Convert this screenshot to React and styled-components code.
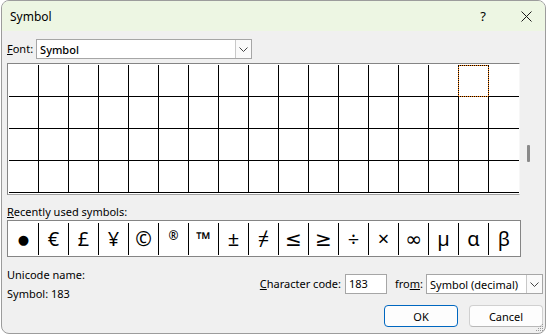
import React from 'react';
import styled, { createGlobalStyle } from 'styled-components';

const GlobalStyle = createGlobalStyle`
  html, body {
    margin: 0;
    padding: 0;
    background: #ffffff;
  }
  body {
    font-family: "Noto Sans", "DejaVu Sans", sans-serif;
    font-size: 11px;
    color: #000;
  }
`;

const COLS = 17;
const ROWS = 4;
const SELECTED = 15;

const recent = [
  { c: '●', size: 13 },
  { c: '€' },
  { c: '£' },
  { c: '¥' },
  { c: '©' },
  { c: '®', small: true },
  { c: '™', size: 19, bold: true },
  { c: '±' },
  { c: '≠' },
  { c: '≤' },
  { c: '≥' },
  { c: '÷' },
  { c: '×' },
  { c: '∞' },
  { c: 'µ' },
  { c: 'α' },
  { c: 'β' },
];

function Chevron() {
  return (
    <svg width="9" height="5" viewBox="0 0 9 5">
      <path d="M0.5 0.5 L4.5 4.5 L8.5 0.5" fill="none" stroke="#444" strokeWidth="1" />
    </svg>
  );
}

//Component
function App() {
  const cells = [];
  for (let i = 0; i < COLS * ROWS; i++) {
    const col = i % COLS;
    cells.push(
      <Cell key={i} last={col === COLS - 1}>
        {i === SELECTED && <Focus />}
      </Cell>
    );
  }

  return (
    <>
      <GlobalStyle />
      <SDWindow>
        <SDTitleBar>
          <SDTitle>Symbol</SDTitle>
          <SDHelp>?</SDHelp>
          <SDClose>
            <svg width="11" height="11" viewBox="0 0 11 11">
              <path d="M0.5 0.5 L10.5 10.5 M10.5 0.5 L0.5 10.5" stroke="#1a1a1a" strokeWidth="1" />
            </svg>
          </SDClose>
        </SDTitleBar>

        <SDBody>
          <SDFontRow>
            <SDLabel>
              <u>F</u>ont:
            </SDLabel>
            <SDCombo width="216px">
              <SDComboText bold>Symbol</SDComboText>
              <SDDrop>
                <Chevron />
              </SDDrop>
            </SDCombo>
          </SDFontRow>

          <SDGridArea>
            <SDGrid>{cells}</SDGrid>
            <SDScroll>
              <SDThumb />
            </SDScroll>
          </SDGridArea>

          <SDRecentLabel>
            <u>R</u>ecently used symbols:
          </SDRecentLabel>
          <SDRecentRow>
            {recent.map((s, i) => (
              <SDRecentCell key={i} last={i === recent.length - 1}>
                <SDGlyph small={s.small} size={s.size} bold={s.bold}>
                  {s.c}
                </SDGlyph>
              </SDRecentCell>
            ))}
          </SDRecentRow>

          <SDBottom>
            <SDInfo>
              <div>Unicode name:</div>
              <div>Symbol: 183</div>
            </SDInfo>
            <SDControls>
              <SDCodeRow>
                <SDLabel>
                  <u>C</u>haracter code:
                </SDLabel>
                <SDInput>183</SDInput>
                <SDFromLabel>
                  fro<u>m</u>:
                </SDFromLabel>
                <SDCombo width="117px">
                  <SDComboText>Symbol (decimal)</SDComboText>
                  <SDDrop>
                    <Chevron />
                  </SDDrop>
                </SDCombo>
              </SDCodeRow>
              <SDButtons>
                <SDButton primary>OK</SDButton>
                <SDButton>Cancel</SDButton>
              </SDButtons>
            </SDControls>
          </SDBottom>
        </SDBody>

        <SDGrip width="8" height="8" viewBox="0 0 8 8">
          <rect x="6" y="0" width="1" height="1" fill="#9a9a9a" />
          <rect x="4" y="2" width="1" height="1" fill="#9a9a9a" />
          <rect x="6" y="2" width="1" height="1" fill="#9a9a9a" />
          <rect x="2" y="4" width="1" height="1" fill="#9a9a9a" />
          <rect x="4" y="4" width="1" height="1" fill="#9a9a9a" />
          <rect x="6" y="4" width="1" height="1" fill="#9a9a9a" />
          <rect x="0" y="6" width="1" height="1" fill="#9a9a9a" />
          <rect x="2" y="6" width="1" height="1" fill="#9a9a9a" />
          <rect x="4" y="6" width="1" height="1" fill="#9a9a9a" />
          <rect x="6" y="6" width="1" height="1" fill="#9a9a9a" />
        </SDGrip>
      </SDWindow>
    </>
  );
}

//Styling Of Component

const SDWindow = styled.div`
  position: relative;
  box-sizing: border-box;
  margin-left: 1px;
  width: 545px;
  height: 334px;
  border: 1px solid #9c9c9c;
  border-radius: 8px;
  background: #f0f0f0;
  overflow: hidden;
  display: flex;
  flex-direction: column;
`;

const SDTitleBar = styled.div`
  display: flex;
  align-items: center;
  height: 30px;
  background: #edf6e3;
`;

const SDTitle = styled.div`
  flex: 1;
  padding-left: 8px;
  font-size: 12px;
`;

const SDHelp = styled.div`
  width: 48px;
  text-align: center;
  font-size: 13px;
`;

const SDClose = styled.div`
  width: 38px;
  display: flex;
  justify-content: center;
  align-items: center;
`;

const SDBody = styled.div`
  display: flex;
  flex-direction: column;
  padding: 0 2px 0 5px;
`;

const SDFontRow = styled.div`
  display: flex;
  align-items: center;
  gap: 3px;
  margin-top: 8px;
  height: 20px;
`;

const SDLabel = styled.span`
  white-space: nowrap;
  line-height: 20px;
`;

const SDCombo = styled.div`
  box-sizing: border-box;
  display: flex;
  align-items: center;
  width: ${(p) => p.width};
  height: 20px;
  border: 1px solid #a6a6a6;
  background: #fff;
`;

const SDComboText = styled.span`
  flex: 1;
  padding-left: 3px;
  white-space: nowrap;
  overflow: hidden;
  font-weight: ${(p) => (p.bold ? 500 : 400)};
`;

const SDDrop = styled.div`
  box-sizing: border-box;
  width: 16px;
  height: 18px;
  display: flex;
  align-items: center;
  justify-content: center;
  border-left: 1px solid #c8c8c8;
  background: #fafafa;
`;

const SDGridArea = styled.div`
  display: flex;
  margin-top: 4px;
`;

const SDGrid = styled.div`
  box-sizing: border-box;
  display: grid;
  grid-template-columns: repeat(${COLS}, 30px);
  grid-auto-rows: 32px;
  width: 513px;
  height: 132px;
  padding: 1px 0 1px 1px;
  background: #fff;
  border-top: 1px solid #858585;
  border-left: 1px solid #858585;
  border-bottom: 1px solid #a0a0a0;
  border-right: 1px solid #f7f7f7;
`;

const Cell = styled.div`
  position: relative;
  box-sizing: border-box;
  border-bottom: 1px solid #000;
  border-right: ${(p) => (p.last ? 'none' : '1px solid #000')};
`;

const Focus = styled.div`
  position: absolute;
  left: -1px;
  top: 0;
  right: -1px;
  bottom: -1px;
  border: 1px solid #ff8a1c;
  outline: 1px dotted #000;
  outline-offset: -1px;
`;

const SDScroll = styled.div`
  width: 16px;
  display: flex;
  justify-content: center;
`;

const SDThumb = styled.div`
  width: 3px;
  height: 17px;
  margin-top: 82px;
  background: #8a8a8a;
  border-radius: 1px;
`;

const SDRecentLabel = styled.div`
  margin-top: 9px;
  line-height: 16px;
`;

const SDRecentRow = styled.div`
  box-sizing: border-box;
  display: flex;
  width: 514px;
  padding: 2px 1px 1px 1px;
  background: #fff;
  border: 1px solid #858585;
`;

const SDRecentCell = styled.div`
  box-sizing: border-box;
  width: 30px;
  height: 32px;
  display: flex;
  align-items: center;
  justify-content: center;
  border-right: ${(p) => (p.last ? 'none' : '1px solid #000')};
`;

const SDGlyph = styled.span`
  font-family: "Noto Sans", "DejaVu Sans", sans-serif;
  font-size: ${(p) => (p.small ? '12px' : p.size ? `${p.size}px` : '20px')};
  line-height: 1;
  align-self: ${(p) => (p.small ? 'flex-start' : 'center')};
  margin-top: ${(p) => (p.small ? '7px' : '0')};
  font-weight: ${(p) => (p.small || p.bold ? 600 : 400)};
`;

const SDBottom = styled.div`
  display: flex;
  justify-content: space-between;
`;

const SDInfo = styled.div`
  margin-top: 8px;
  line-height: 19px;
`;

const SDControls = styled.div`
  display: flex;
  flex-direction: column;
  align-items: flex-end;
  margin-top: 17px;
`;

const SDCodeRow = styled.div`
  display: flex;
  align-items: center;
  height: 20px;
`;

const SDInput = styled.div`
  box-sizing: border-box;
  width: 42px;
  height: 20px;
  margin-left: 4px;
  padding-left: 3px;
  line-height: 18px;
  background: #fff;
  border: 1px solid #a6a6a6;
`;

const SDFromLabel = styled(SDLabel)`
  margin: 0 3px 0 8px;
`;

const SDButtons = styled.div`
  display: flex;
  gap: 11px;
  margin-top: 11px;
`;

const SDButton = styled.button`
  box-sizing: border-box;
  width: 74px;
  height: 22px;
  padding: 0;
  font-family: "Noto Sans", "DejaVu Sans", sans-serif;
  font-size: 11px;
  color: #000;
  background: #fdfdfd;
  border: 1px solid ${(p) => (p.primary ? '#0067c0' : '#d0d0d0')};
  border-bottom-color: ${(p) => (p.primary ? '#0067c0' : '#b8b8b8')};
  border-radius: 4px;
  cursor: pointer;
`;

const SDGrip = styled.svg`
  position: absolute;
  right: 1px;
  bottom: 1px;
`;

export default App;
